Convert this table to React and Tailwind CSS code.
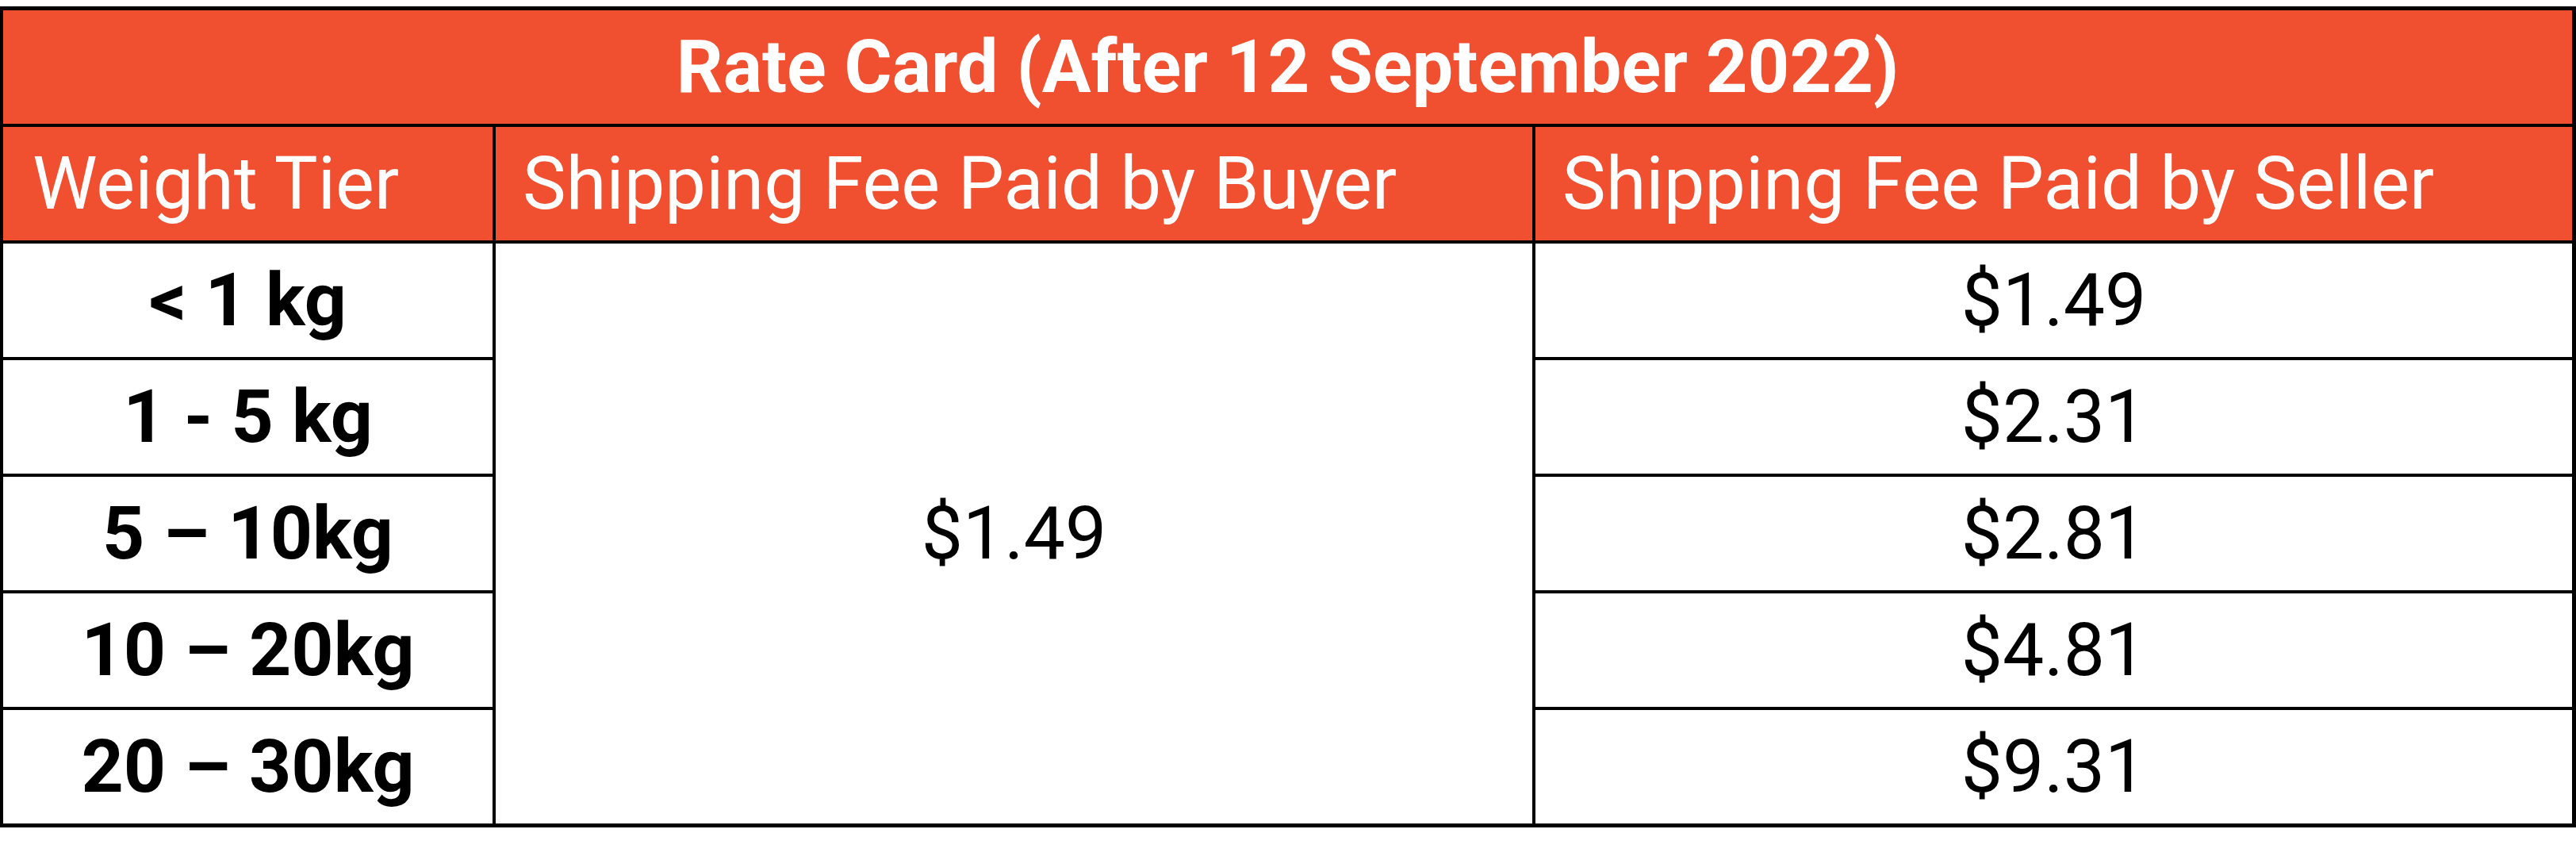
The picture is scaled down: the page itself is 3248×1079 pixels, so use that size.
import React from "react";

const rates = [
  { tier: "< 1 kg", seller: "$1.49" },
  { tier: "1 - 5 kg", seller: "$2.31" },
  { tier: "5 – 10kg", seller: "$2.81" },
  { tier: "10 – 20kg", seller: "$4.81" },
  { tier: "20 – 30kg", seller: "$9.31" },
];

export default function App() {
  return (
    <div className="min-h-screen bg-white pt-[8px] font-['Roboto',sans-serif]">
      <div className="grid grid-cols-[617px_1fr_1fr] auto-rows-[143px] gap-[4px] bg-black border-[5px] border-l-[4px] border-black">
        {/* title */}
        <div className="col-span-3 bg-[#f04f30] flex items-center justify-center text-white font-bold text-[92px] leading-none">
          Rate Card (After 12 September 2022)
        </div>

        {/* column headers */}
        <div className="bg-[#f04f30] flex items-center pl-[37px] text-white text-[92px] leading-none">
          Weight Tier
        </div>
        <div className="bg-[#f04f30] flex items-center pl-[34px] text-white text-[92px] leading-none">
          Shipping Fee Paid by Buyer
        </div>
        <div className="bg-[#f04f30] flex items-center pl-[34px] text-white text-[92px] leading-none">
          Shipping Fee Paid by Seller
        </div>

        {rates.map((r, i) => (
          <React.Fragment key={r.tier}>
            <div className="bg-white flex items-center justify-center font-bold text-black text-[93px] leading-none">
              {r.tier}
            </div>
            {i === 0 && (
              <div className="row-span-5 bg-white flex items-center justify-center text-black text-[93px] leading-none">
                $1.49
              </div>
            )}
            <div className="bg-white flex items-center justify-center text-black text-[93px] leading-none">
              {r.seller}
            </div>
          </React.Fragment>
        ))}
      </div>
    </div>
  );
}
